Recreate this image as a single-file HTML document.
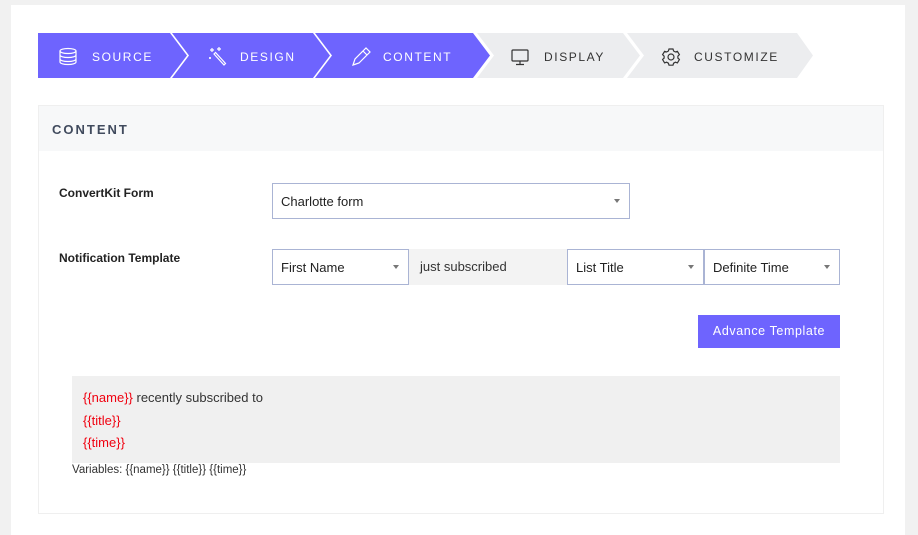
<!DOCTYPE html>
<html><head><meta charset="utf-8"><style>
*{margin:0;padding:0;box-sizing:border-box}
body{width:918px;height:527px;background:#f1f1f1;font-family:"Liberation Sans",sans-serif;position:relative;overflow:hidden;color:#333}
.wrap{position:absolute;left:11px;top:5px;width:894px;height:530px;background:#fff}
.abs{position:absolute}
.st{position:absolute;top:49px;font-size:12px;letter-spacing:1.6px;line-height:16px}
.panel{position:absolute;left:38px;top:105px;width:846px;height:409px;border:1px solid #efefef;background:#fff}
.ph{height:45px;background:#f7f8f9;padding:16px 0 0 13px;font-weight:bold;font-size:13px;letter-spacing:2px;color:#414b5e}
.lbl{position:absolute;font-size:12px;font-weight:bold;color:#222}
.sel{position:absolute;border:1px solid #aab4d4;background:#fff;font-size:13px;color:#222;padding-left:8px;line-height:35px}
.sel:after{content:"";position:absolute;right:9px;top:15px;border:3px solid transparent;border-top:4px solid #777}
</style></head><body>
<div class="wrap"></div>
<svg class="abs" style="left:0;top:0" width="918" height="100">
<polygon points="38,33 170,33 187,55.5 170,78 38,78" fill="#6e64fe"/>
<polygon points="172,33 313,33 330,55.5 313,78 172,78 189,55.5" fill="#6e64fe"/>
<polygon points="315,33 473,33 490,55.5 473,78 315,78 332,55.5" fill="#6e64fe"/>
<polygon points="477,33 623,33 640,55.5 623,78 477,78 494,55.5" fill="#ecedef"/>
<polygon points="627,33 797,33 813,55.5 797,78 627,78 644,55.5" fill="#ecedef"/>
<g fill="none" stroke="#fff" stroke-width="1.2">
<ellipse cx="68" cy="51" rx="8" ry="2.5"/>
<path d="M60 51v11c0 1.4 3.6 2.5 8 2.5s8-1.1 8-2.5V51M60 55c0 1.4 3.6 2.5 8 2.5s8-1.1 8-2.5M60 59c0 1.4 3.6 2.5 8 2.5s8-1.1 8-2.5"/>
<path d="M214 54l10 11 1.5-1.5-10-11zM212 48v4M210 50h4M219 47v4M217 49h4M210 57v2M209 58h2"/>
<path d="M353 65l2-6 11-11 4 4-11 11zM363 51l4 4M353 65l3-1"/>
</g>
<g fill="none" stroke="#333" stroke-width="1.2">
<rect x="512" y="50" width="16" height="11" rx="1"/><path d="M520 61v3M516 64.5h8"/>
<circle cx="671" cy="57" r="3"/>
<path d="M669 49h4l.6 2 1.8 1 2-.7 2 3.4-1.5 1.4v2l1.5 1.4-2 3.4-2-.7-1.8 1-.6 2h-4l-.6-2-1.8-1-2 .7-2-3.4 1.5-1.4v-2l-1.5-1.4 2-3.4 2 .7 1.8-1z"/>
</g>
</svg>
<div class="st" style="left:92px;color:#fff">SOURCE</div>
<div class="st" style="left:240px;color:#fff">DESIGN</div>
<div class="st" style="left:383px;color:#fff">CONTENT</div>
<div class="st" style="left:544px;color:#333">DISPLAY</div>
<div class="st" style="left:694px;color:#333">CUSTOMIZE</div>
<div class="panel"><div class="ph">CONTENT</div></div>
<div class="lbl" style="left:59px;top:186px">ConvertKit Form</div>
<div class="lbl" style="left:59px;top:251px">Notification Template</div>
<div class="sel" style="left:272px;top:183px;width:358px;height:36px">Charlotte form</div>
<div class="sel" style="left:272px;top:249px;width:137px;height:36px">First Name</div>
<div class="abs" style="left:409px;top:249px;width:158px;height:36px;background:#f3f3f3;font-size:13px;line-height:36px;padding-left:11px;color:#333">just subscribed</div>
<div class="sel" style="left:567px;top:249px;width:137px;height:36px">List Title</div>
<div class="sel" style="left:704px;top:249px;width:136px;height:36px">Definite Time</div>
<div class="abs" style="left:698px;top:315px;width:142px;height:33px;background:#6e64fe;color:#fff;font-size:12.5px;letter-spacing:.6px;text-align:center;line-height:33px">Advance Template</div>
<div class="abs" style="left:72px;top:376px;width:768px;height:87px;background:#f0f0f0;font-size:13px;line-height:22.5px;padding:11px 0 0 11px;color:#333">
<span style="color:#f0000f">{{name}}</span> recently subscribed to<br><span style="color:#f0000f">{{title}}</span><br><span style="color:#f0000f">{{time}}</span></div>
<div class="abs" style="left:72px;top:464px;font-size:11.5px;color:#333">Variables: {{name}} {{title}} {{time}}</div>
</body></html>
